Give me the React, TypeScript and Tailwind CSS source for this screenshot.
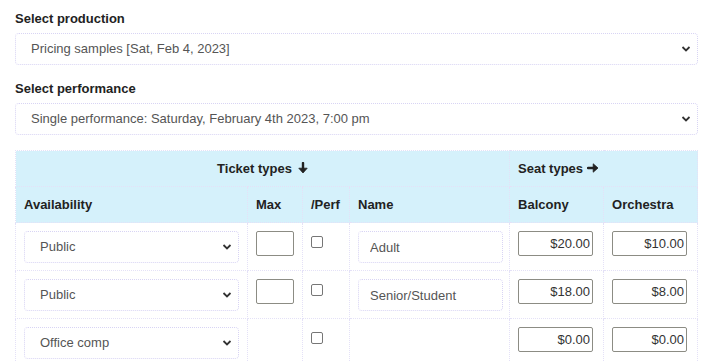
import { useState } from 'react';

type Row = {
  id: number;
  availability: string;
  max: boolean;
  name: string | null;
  balcony: string;
  orchestra: string;
};

const rows: Row[] = [
  { id: 1, availability: 'Public', max: true, name: 'Adult', balcony: '$20.00', orchestra: '$10.00' },
  { id: 2, availability: 'Public', max: true, name: 'Senior/Student', balcony: '$18.00', orchestra: '$8.00' },
  { id: 3, availability: 'Office comp', max: false, name: null, balcony: '$0.00', orchestra: '$0.00' },
];

function Chevron() {
  return (
    <svg
      width="10"
      height="7"
      viewBox="0 0 10 7"
      className="pointer-events-none absolute right-[7px] top-1/2 -translate-y-1/2"
    >
      <path d="M1.5 1.5 L5 5 L8.5 1.5" fill="none" stroke="#333" strokeWidth="1.8" />
    </svg>
  );
}

function ArrowDown() {
  return (
    <svg width="10" height="12" viewBox="0 0 10 12" className="ml-[6px] inline-block align-[-1px]">
      <path d="M5 1 V8" stroke="#222" strokeWidth="2.4" strokeLinecap="round" />
      <path d="M0.8 6.2 L5 11 L9.2 6.2 Z" fill="#222" stroke="#222" strokeWidth="0.8" strokeLinejoin="round" />
    </svg>
  );
}

function ArrowRight() {
  return (
    <svg width="12" height="10" viewBox="0 0 12 10" className="ml-[4px] inline-block align-[0px]">
      <path d="M1 5 H7.5" stroke="#222" strokeWidth="2.4" strokeLinecap="round" />
      <path d="M6.2 0.8 L11 5 L6.2 9.2 Z" fill="#222" stroke="#222" strokeWidth="0.8" strokeLinejoin="round" />
    </svg>
  );
}

function Select({ value, options }: { value: string; options: string[] }) {
  const [v, setV] = useState(value);
  return (
    <div className="relative">
      <select
        value={v}
        onChange={(e) => setV(e.target.value)}
        className="block h-[32px] w-full appearance-none rounded-[4px] border border-dotted border-[#d8d4f4] bg-white pl-[15px] pr-8 text-[13px] text-[#555] outline-none"
      >
        {options.map((o) => (
          <option key={o}>{o}</option>
        ))}
      </select>
      <Chevron />
    </div>
  );
}

const line = 'border border-dotted border-[#e4e1f7]';
const cell = `${line} px-[8px] align-top`;
const head = `${line} px-[8px] align-middle text-[13px] font-bold text-[#222]`;

export default function App() {
  return (
    <div
      className="bg-white pl-[15px] pr-[7px] pt-[11px]"
      style={{ fontFamily: '"Liberation Sans", Arial, sans-serif' }}
    >
      <div className="text-[13px] font-bold leading-[16px] text-[#222]">Select production</div>
      <div className="mt-[6px]">
        <Select value="Pricing samples [Sat, Feb 4, 2023]" options={['Pricing samples [Sat, Feb 4, 2023]']} />
      </div>
      <div className="mt-[16px] text-[13px] font-bold leading-[16px] text-[#222]">Select performance</div>
      <div className="mt-[6px]">
        <Select
          value="Single performance: Saturday, February 4th 2023, 7:00 pm"
          options={['Single performance: Saturday, February 4th 2023, 7:00 pm']}
        />
      </div>

      <table className="mt-[15px] w-[682px] table-fixed border-collapse">
        <colgroup>
          <col className="w-[232px]" />
          <col className="w-[55px]" />
          <col className="w-[47px]" />
          <col className="w-[160px]" />
          <col className="w-[94px]" />
          <col className="w-[94px]" />
        </colgroup>
        <thead className="bg-[#d5f1fb]">
          <tr className="h-[36px]">
            <th colSpan={4} className={`${head} text-center`}>
              Ticket types
              <ArrowDown />
            </th>
            <th colSpan={2} className={`${head} text-left`}>
              Seat types
              <ArrowRight />
            </th>
          </tr>
          <tr className="h-[36px]">
            <th className={`${head} text-left`}>Availability</th>
            <th className={`${head} text-left`}>Max</th>
            <th className={`${head} text-left`}>/Perf</th>
            <th className={`${head} text-left`}>Name</th>
            <th className={`${head} text-left`}>Balcony</th>
            <th className={`${head} text-left`}>Orchestra</th>
          </tr>
        </thead>
        <tbody>
          {rows.map((r) => (
            <tr key={r.id} className="h-[48px]">
              <td className={`${cell} pt-[8px]`}>
                <Select value={r.availability} options={['Public', 'Office comp', 'Members']} />
              </td>
              <td className={`${cell} pt-[8px]`}>
                {r.max && (
                  <input className="block h-[25px] w-[38px] rounded-[2px] border border-[#8c8c84] bg-white outline-none" />
                )}
              </td>
              <td className={`${cell} pt-[13px]`}>
                <input
                  type="checkbox"
                  className="block h-[12px] w-[12px] appearance-none rounded-[2px] border border-[#767676] bg-white"
                />
              </td>
              <td className={`${cell} pt-[8px]`}>
                {r.name && (
                  <input
                    defaultValue={r.name}
                    className="block h-[32px] w-[145px] rounded-[4px] border border-dotted border-[#d8d4f4] bg-white pl-[11px] text-[13px] text-[#555] outline-none"
                  />
                )}
              </td>
              <td className={`${cell} pt-[8px]`}>
                <input
                  defaultValue={r.balcony}
                  className="block h-[25px] w-[75px] rounded-[2px] border border-[#8c8c84] bg-white pr-[2px] text-right text-[13px] text-[#333] outline-none"
                />
              </td>
              <td className={`${cell} pt-[8px]`}>
                <input
                  defaultValue={r.orchestra}
                  className="block h-[25px] w-[75px] rounded-[2px] border border-[#8c8c84] bg-white pr-[2px] text-right text-[13px] text-[#333] outline-none"
                />
              </td>
            </tr>
          ))}
        </tbody>
      </table>
    </div>
  );
}
